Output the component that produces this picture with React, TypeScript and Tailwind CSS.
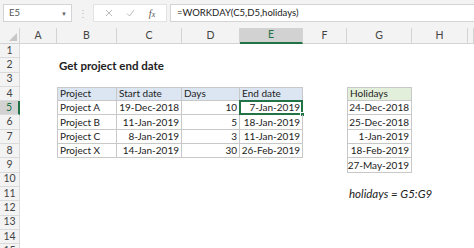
import React from 'react';

const COLS = ['A', 'B', 'C', 'D', 'E', 'F', 'G', 'H', ''];
const ROW_COUNT = 15;

type Cell = { text?: string; right?: boolean; bold?: boolean; italic?: boolean; kind?: 'head' | 'body' | 'hhead' | 'hbody' };

// sheet contents keyed by "col,row"
const cells: Record<string, Cell> = {
  'B,2': { text: 'Get project end date', bold: true },
  'B,4': { text: 'Project', kind: 'head' },
  'C,4': { text: 'Start date', kind: 'head' },
  'D,4': { text: 'Days', kind: 'head' },
  'E,4': { text: 'End date', kind: 'head' },
  'G,4': { text: 'Holidays', kind: 'hhead' },
  'G,11': { text: 'holidays = G5:G9', italic: true },
};

const projects = [
  ['Project A', '19-Dec-2018', '10', '7-Jan-2019'],
  ['Project B', '11-Jan-2019', '5', '18-Jan-2019'],
  ['Project C', '8-Jan-2019', '3', '11-Jan-2019'],
  ['Project X', '14-Jan-2019', '30', '26-Feb-2019'],
];
projects.forEach((p, i) => {
  const r = 5 + i;
  cells[`B,${r}`] = { text: p[0], kind: 'body' };
  cells[`C,${r}`] = { text: p[1], kind: 'body', right: true };
  cells[`D,${r}`] = { text: p[2], kind: 'body', right: true };
  cells[`E,${r}`] = { text: p[3], kind: 'body', right: true };
});
['24-Dec-2018', '25-Dec-2018', '1-Jan-2019', '18-Feb-2019', '27-May-2019'].forEach((d, i) => {
  cells[`G,${5 + i}`] = { text: d, kind: 'hbody', right: true };
});

function SheetCell({ col, row }: { col: string; row: number }) {
  const c = cells[`${col},${row}`];
  const selected = col === 'E' && row === 5;
  let cls = 'relative flex items-end px-[2px] pb-[1px] leading-[12px] whitespace-nowrap text-[10px] text-[#222]';
  if (c?.kind) {
    cls += ' border-r border-b border-[#c8c8c8]';
    if (row === 4) cls += ' border-t';
    if (col === 'B' || col === 'G') cls += ' border-l';
  }
  if (c?.kind === 'head') cls += ' bg-[#dce6f2]';
  if (c?.kind === 'hhead') cls += ' bg-[#e2efda]';
  if (c?.right) cls += ' justify-end';
  if (c?.bold) cls += ' font-bold text-[11.5px]';
  if (c?.italic) cls += ' italic text-[11.5px]';
  return (
    <div className={cls}>
      {c?.text && <span className={c.bold || c.italic ? 'absolute left-[2px] bottom-[1px]' : ''}>{c.text}</span>}
      {selected && (
        <>
          <div className="absolute -inset-[1px] border-2 border-[#217346]" />
          <div className="absolute -right-[3px] -bottom-[3px] w-[5px] h-[5px] bg-[#217346] border border-white" />
        </>
      )}
    </div>
  );
}

export default function App() {
  const rows = Array.from({ length: ROW_COUNT }, (_, i) => i + 1);
  return (
    <div className="w-[474px] h-[248px] overflow-hidden bg-white" style={{ fontFamily: 'Lato, "Open Sans", sans-serif' }}>
      {/* formula bar */}
      <div className="h-[28px] bg-[#f3f3f3] flex items-start pt-[4px] pl-[3px]">
        <div className="w-[69px] h-[18px] bg-white border border-[#d4d4d4] flex items-center justify-between pl-[5px] pr-[4px] text-[9.5px] text-[#555]">
          <span>E5</span>
          <span className="text-[6px] text-[#666]">▼</span>
        </div>
        <div className="w-[21px] h-[18px] flex items-center justify-center text-[#b8b8b8] text-[10px] leading-none">⋮</div>
        <div className="w-[74px] h-[18px] bg-white border border-[#e3e3e3] flex items-center justify-around px-[4px]">
          <svg width="8" height="8" viewBox="0 0 8 8" stroke="#bdbdbd" strokeWidth="1"><path d="M1 1 7 7M7 1 1 7" /></svg>
          <svg width="9" height="8" viewBox="0 0 9 8" stroke="#bdbdbd" strokeWidth="1" fill="none"><path d="M1 4.5 3.5 7 8 1" /></svg>
          <span className="italic text-[10px] text-[#555]" style={{ fontFamily: '"Liberation Serif", serif' }}>
            f<span className="text-[8px]">x</span>
          </span>
        </div>
        <div className="flex-1 ml-[3px] h-[18px] bg-white border border-[#d4d4d4] border-r-0 flex items-center pl-[6px] text-[9.5px] text-[#222]">
          =WORKDAY(C5,D5,holidays)
        </div>
      </div>
      {/* grid */}
      <div className="grid grid-cols-[20px_37px_60px_65px_58px_63px_44px_65px_56px_6px] grid-rows-[16px_repeat(15,14.3px)]">
        <div className="bg-[#f3f3f3] border-r border-b border-[#d4d4d4] relative">
          <div className="absolute right-[2px] bottom-[2px] w-0 h-0 border-l-[8px] border-l-transparent border-b-[8px] border-b-[#c6c6c6]" />
        </div>
        {COLS.map((c) => (
          <div
            key={c || 'x'}
            className={
              'flex items-center justify-center text-[10.5px] border-r border-[#d4d4d4] ' +
              (c === 'E' ? 'bg-[#d2d2d2] border-b-2 border-b-[#217346] text-[#217346]' : 'bg-[#f3f3f3] border-b text-[#444]')
            }
          >
            {c}
          </div>
        ))}
        {rows.map((r) => (
          <React.Fragment key={r}>
            <div
              className={
                'flex items-center justify-center text-[10.5px] border-b border-[#dadada] ' +
                (r === 5 ? 'bg-[#d2d2d2] border-r-2 border-r-[#217346] text-[#217346]' : 'bg-[#f3f3f3] border-r text-[#444]')
              }
            >
              {r}
            </div>
            {COLS.map((c) => (
              <SheetCell key={c || 'x'} col={c} row={r} />
            ))}
          </React.Fragment>
        ))}
      </div>
    </div>
  );
}
